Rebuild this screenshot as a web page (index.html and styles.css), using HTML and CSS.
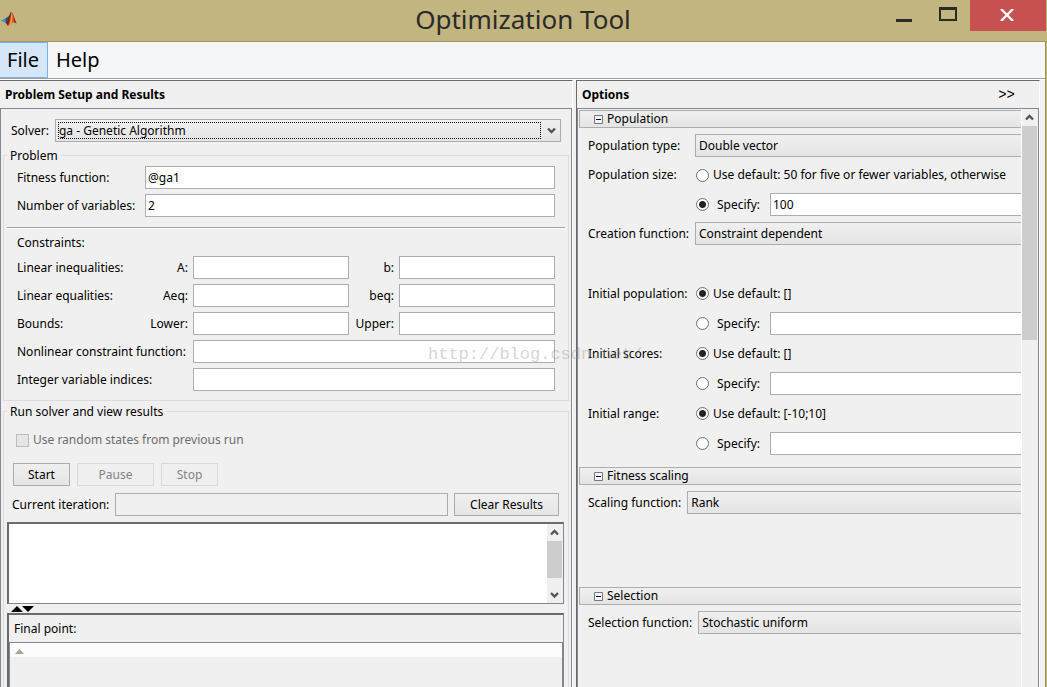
FILE: index.html
```html
<!DOCTYPE html>
<html lang="en">
<head>
<meta charset="utf-8">
<title>Optimization Tool</title>
<link rel="stylesheet" href="styles.css">
</head>
<body>
<header class="titlebar">
  <svg class="logo" width="16" height="16" viewBox="0 0 16 16" aria-hidden="true">
    <path d="M0 9.500 5 7l3 2.500L4.500 12z" fill="#3f8fc4"/>
    <path d="M5 7 8 5l2-4-1 7-2 3-2.500-1z" fill="#35506f"/>
    <path d="M4.500 11.500 7 9l3-8.500 1 4-1 6-3 4.500z" fill="#8a1f14"/>
    <path d="M10.500.5 12 3l3.500 9.500-2.500-1.500-2.500 1.500L7 15l2-6z" fill="#d9541e"/>
    <path d="M10.500 1.500 11.500 6l-.5 5.500L8 14.500l1.500-5z" fill="#f2a541"/>
    <path d="M12 4l3.500 8.500-2.500-1.500z" fill="#a82a1a"/>
  </svg>
  <h1 class="title">Optimization Tool</h1>
  <div class="window-buttons">
    <button class="win-btn" aria-label="Minimize"><svg width="18" height="18" viewBox="0 0 18 18"><path d="M1 12h16v3H1z" fill="#2a2a2a"/></svg></button>
    <button class="win-btn" aria-label="Maximize"><svg width="18" height="18" viewBox="0 0 18 18"><path d="M0 0h18v14H0zM2 3v9h14V3z" fill="#2a2a2a" fill-rule="evenodd"/></svg></button>
    <button class="win-btn close" aria-label="Close"><svg width="14" height="12" viewBox="0 0 14 12"><path d="M1 0 13 12M13 0 1 12" stroke="#fff" stroke-width="2.400"/></svg></button>
  </div>
</header>
<div class="frame">
  <nav class="menubar">
    <button class="menu active">File</button>
    <button class="menu">Help</button>
  </nav>
  <main class="panes">
    <section class="pane setup">
      <h2 class="pane-title">Problem Setup and Results</h2>
      <div class="setup-body">
        <div class="solver">
          <label for="solver">Solver:</label>
          <div class="solver-box">
            <select id="solver" class="select"><option>ga - Genetic Algorithm</option></select>
            <span class="focus-ring"></span>
            <svg class="chevron" width="9" height="7" viewBox="0 0 9 7"><path d="M1 1.500 4.500 5 8 1.500" fill="none" stroke="#555" stroke-width="2.400"/></svg>
          </div>
        </div>
        <fieldset class="group">
          <legend>Problem</legend>
          <div class="problem-grid">
            <label for="fit">Fitness function:</label><input id="fit" class="field" type="text" value="@ga1">
            <label for="nvars">Number of variables:</label><input id="nvars" class="field" type="text" value="2">
          </div>
          <hr class="rule">
          <p class="subhead">Constraints:</p>
          <div class="constraints">
            <span>Linear inequalities:</span><label class="end" for="a">A:</label><input id="a" class="field" type="text"><label class="end" for="b">b:</label><input id="b" class="field" type="text">
            <span>Linear equalities:</span><label class="end" for="aeq">Aeq:</label><input id="aeq" class="field" type="text"><label class="end" for="beq">beq:</label><input id="beq" class="field" type="text">
            <span>Bounds:</span><label class="end" for="lo">Lower:</label><input id="lo" class="field" type="text"><label class="end" for="up">Upper:</label><input id="up" class="field" type="text">
            <label class="two" for="nonl">Nonlinear constraint function:</label><input id="nonl" class="field three" type="text">
            <label class="two" for="ints">Integer variable indices:</label><input id="ints" class="field three" type="text">
          </div>
        </fieldset>
        <fieldset class="group run">
          <legend>Run solver and view results</legend>
          <label class="random"><input type="checkbox" class="check" disabled>Use random states from previous run</label>
          <div class="run-buttons">
            <button class="btn">Start</button>
            <button class="btn wide" disabled>Pause</button>
            <button class="btn" disabled>Stop</button>
          </div>
          <div class="iteration">
            <label for="iter">Current iteration:</label>
            <input id="iter" class="field readonly" type="text" readonly>
            <button class="btn clear">Clear Results</button>
          </div>
          <div class="output">
            <textarea class="log" aria-label="Results"></textarea>
            <div class="scrollbar">
              <svg class="arrow" width="15" height="17" viewBox="0 0 15 17"><path d="M4 10.500 7.500 7 11 10.500" fill="none" stroke="#555" stroke-width="2.400"/></svg>
              <span class="thumb"></span>
              <svg class="arrow last" width="15" height="17" viewBox="0 0 15 17"><path d="M4 7 7.500 10.500 11 7" fill="none" stroke="#555" stroke-width="2.400"/></svg>
            </div>
          </div>
          <svg class="split" width="24" height="9" viewBox="0 0 24 9"><path d="M0 8 6 2l6 6zM11 2h12l-6 6z" fill="#000"/></svg>
          <div class="final">
            <p class="final-title">Final point:</p>
            <table class="final-table">
              <thead><tr><th aria-label="Sort"><svg width="9" height="5" viewBox="0 0 9 5"><path d="M0 5 4.500 0 9 5z" fill="#a5a493"/></svg></th></tr></thead>
            </table>
          </div>
        </fieldset>
      </div>
    </section>
    <section class="pane options">
      <div class="options-head">
        <h2 class="pane-title">Options</h2>
        <button class="expand">&gt;&gt;</button>
      </div>
      <div class="options-body">
        <div class="options-list">
          <section class="opt-section population">
            <h3 class="bar"><svg width="9" height="9" viewBox="0 0 9 9"><path d="M.5.5h8v8h-8z" fill="#f5f5f5" stroke="#777"/><path d="M2 4h5v1H2z" fill="#00006b"/></svg>Population</h3>
            <div class="opt-grid">
              <label for="ptype">Population type:</label>
              <select id="ptype" class="select cut"><option>Double vector</option></select>
              <span class="row-a">Population size:</span>
              <label class="choice row-a"><input class="radio" type="radio" name="size">Use default: 50 for five or fewer variables, otherwise</label>
              <div class="specify"><label class="choice"><input class="radio" type="radio" name="size" checked>Specify:</label><input class="field cut" type="text" value="100" aria-label="Population size value"></div>
              <label class="creation" for="creation">Creation function:</label>
              <select id="creation" class="select cut creation"><option>Constraint dependent</option></select>
              <span class="row-b">Initial population:</span>
              <label class="choice row-b"><input class="radio" type="radio" name="pop" checked>Use default: []</label>
              <div class="specify"><label class="choice"><input class="radio" type="radio" name="pop">Specify:</label><input class="field cut" type="text" aria-label="Initial population value"></div>
              <span class="row-b">Initial scores:</span>
              <label class="choice row-b"><input class="radio" type="radio" name="scores" checked>Use default: []</label>
              <div class="specify"><label class="choice"><input class="radio" type="radio" name="scores">Specify:</label><input class="field cut" type="text" aria-label="Initial scores value"></div>
              <span class="row-b">Initial range:</span>
              <label class="choice row-b"><input class="radio" type="radio" name="range" checked>Use default: [-10;10]</label>
              <div class="specify"><label class="choice"><input class="radio" type="radio" name="range">Specify:</label><input class="field cut" type="text" aria-label="Initial range value"></div>
            </div>
          </section>
          <section class="opt-section scaling">
            <h3 class="bar"><svg width="9" height="9" viewBox="0 0 9 9"><path d="M.5.5h8v8h-8z" fill="#f5f5f5" stroke="#777"/><path d="M2 4h5v1H2z" fill="#00006b"/></svg>Fitness scaling</h3>
            <div class="opt-row"><label for="scal">Scaling function:</label><select id="scal" class="select cut"><option>Rank</option></select></div>
          </section>
          <section class="opt-section">
            <h3 class="bar"><svg width="9" height="9" viewBox="0 0 9 9"><path d="M.5.5h8v8h-8z" fill="#f5f5f5" stroke="#777"/><path d="M2 4h5v1H2z" fill="#00006b"/></svg>Selection</h3>
            <div class="opt-row selection"><label for="sel">Selection function:</label><select id="sel" class="select cut"><option>Stochastic uniform</option></select></div>
          </section>
        </div>
        <div class="scrollbar tall">
          <svg class="arrow" width="15" height="17" viewBox="0 0 15 17"><path d="M4 10.500 7.500 7 11 10.500" fill="none" stroke="#555" stroke-width="2.400"/></svg>
          <span class="thumb"></span>
        </div>
      </div>
    </section>
  </main>
</div>
<span class="watermark">http://blog.csdn.net/</span>
</body>
</html>
```
FILE: styles.css
```css
* { box-sizing: border-box; }
body {
  margin: 0;
  height: 100vh;
  display: flex;
  flex-direction: column;
  overflow: hidden;
  background: #f0f0f0;
  color: #000;
  font: 12px/16px "Noto Sans", "Open Sans", sans-serif;
}
h1, h2, h3, p { margin: 0; }
button, input, select, textarea { font: inherit; color: inherit; margin: 0; }
label, span { white-space: nowrap; }

.titlebar {
  flex: none;
  display: grid;
  grid-template-columns: 1fr auto 1fr;
  height: 42px;
  padding-right: 1px;
  background: #c2b580;
  border-bottom: 1px solid #a09468;
}
.logo { margin: 11px 0 0 1px; }
.title { font-size: 26px; font-weight: 400; line-height: 38px; color: #2a2a2a; }
.window-buttons { display: flex; justify-content: flex-end; align-items: flex-start; }
.win-btn { width: 44px; height: 31px; padding: 0; border: 0; background: none; display: grid; place-items: center; }
.win-btn.close { width: 76px; height: 31px; padding: 0 2px 2px 0; background: #c75050; }

.frame { flex: 1; min-height: 0; display: flex; flex-direction: column; border-right: 1px solid #c2b580; box-shadow: inset -1px 0 #a08f58; padding-right: 1px; }
.menubar { flex: none; display: flex; height: 37px; background: #f5f6f7; border-bottom: 1px solid #a0a0a0; }
.menu { height: 36px; padding: 0 8px 0 7px; border: 1px solid transparent; border-left: 0; background: none; font-size: 20px; line-height: 32px; }
.menu.active { background: #d5e6f8; border-color: #7bb1e8; }
.menu + .menu { padding-left: 8px; }

.panes { flex: 1; min-height: 0; display: grid; grid-template-columns: 573fr 464fr; column-gap: 3px; padding-right: 5px; border-top: 1px solid #fff; }
.pane { min-width: 0; display: flex; flex-direction: column; border-top: 1px solid #696969; border-right: 1px solid #fff; }
.pane-title { flex: none; height: 27px; padding-left: 5px; font-size: 12px; line-height: 27px; }
.setup { min-height: 0; }
.setup-body { flex: 1; min-height: 0; padding: 10px 2px 0; border: 1px solid #828790; border-bottom: 0; overflow: hidden; }
.solver { display: flex; align-items: center; gap: 6px; padding: 0 8px; }
.solver-box { flex: 1; position: relative; }
.solver-box .select { width: 100%; }
.focus-ring { position: absolute; inset: 3px 20px 3px 3px; border: 1px dotted #000; pointer-events: none; }
.chevron { position: absolute; right: 5px; top: 8px; pointer-events: none; }

.select { appearance: none; display: block; height: 23px; min-width: 0; padding: 0 4px 0 3px; border: 1px solid #abadb3; border-radius: 0; background: linear-gradient(#f0f0f0, #e4e4e4); line-height: 21px; }
.field { height: 23px; min-width: 0; width: 100%; padding: 0 2px; border: 1px solid #abadb3; background: #fff; }
.field.readonly { background: #f0f0f0; }
.cut { border-right: 0; }

.group { margin: 6px 0 0; padding: 4px 3px 9px; min-width: 0; border: 1px solid #dcdcdc; }
.group legend { height: 14px; padding: 0 3px; margin-left: 0; line-height: 16px; }
.problem-grid { display: grid; grid-template-columns: 123px 1fr; column-gap: 5px; row-gap: 5px; align-items: center; padding: 0 10px; }
.rule { height: 2px; margin: 10px 0 6px; border: 0; border-top: 1px solid #a0a0a0; border-bottom: 1px solid #fff; }
.subhead { padding-left: 10px; margin-bottom: 5px; }
.constraints { display: grid; grid-template-columns: 120px 56px 1fr 50px 1fr; row-gap: 5px; align-items: center; padding: 0 10px; }
.constraints .end { text-align: right; padding-right: 5px; }
.constraints .two { grid-column: span 2; }
.constraints .three { grid-column: span 3; }

.run { margin-top: 3px; padding-bottom: 0; border-bottom: 0; }
.random { display: flex; align-items: center; gap: 4px; height: 16px; margin: 10px 0 15px 9px; color: #6d6d6d; }
.check { appearance: none; width: 13px; height: 13px; border: 1px solid #bcbcbc; background: #e6e6e6; }
.run-buttons { display: flex; gap: 7px; padding-left: 6px; }
.btn { width: 57px; height: 23px; padding: 0; border: 1px solid #acacac; background: linear-gradient(#f0f0f0, #e5e5e5); line-height: 20px; }
.btn.wide { width: 77px; }
.btn.clear { width: 105px; flex: none; }
.btn:disabled { background: #efefef; border-color: #d9d9d9; color: #838383; }
.iteration { display: flex; align-items: center; gap: 6px; margin: 7px 0 6px; padding: 0 6px 0 5px; }
.iteration .field { flex: 1; }
.output { display: flex; height: 82px; margin-right: 1px; border: 1px solid #828790; border-top: 2px solid #696b70; border-left: 2px solid #696b70; background: #fff; }
.log { flex: 1; min-width: 0; padding: 2px; border: 0; outline: 0; resize: none; background: #fff; }
.scrollbar { flex: none; display: flex; flex-direction: column; width: 16px; background: #f0f0f0; }
.arrow { flex: none; }
.arrow.last { margin-top: auto; }
.thumb { width: 15px; height: 37px; background: #cdcdcd; }
.split { display: block; margin: 0 0 0 4px; }
.final { margin-right: 1px; border: 1px solid #828790; border-top: 2px solid #696b70; border-left: 2px solid #696b70; border-bottom: 0; }
.final-title { padding: 6px 5px 5px; }
.final-table { width: 100%; height: 45px; border: 1px solid #828790; border-bottom: 0; border-spacing: 0; }
.final-table th { padding: 5px 5px 0; text-align: left; vertical-align: top; line-height: 8px; background: linear-gradient(#fcfcfc 14px, #e6eefa 14px, #e6eefa 15px, #f0f0f0 15px); }
.final-table svg { display: block; margin-top: 1px; }

.options { border-left: 1px solid #696969; }
.options-head { display: flex; justify-content: space-between; height: 27px; }
.expand { padding: 0 24px 0 0; border: 0; background: none; font: 14px/28px "Liberation Mono", monospace; }
.options-body { flex: 1; min-height: 0; display: flex; border: 1px solid #828790; border-bottom: 0; }
.options-list { flex: 1; min-width: 0; overflow: hidden; padding: 1px 0 0 1px; border-right: 1px solid #fff; }
.bar { display: flex; align-items: center; gap: 4px; height: 18px; margin-bottom: 6px; padding-left: 14px; border: 1px solid #abadb3; border-right: 0; background: linear-gradient(#f0f0f0, #e4e4e4); font-size: 12px; font-weight: 400; line-height: 18px; }
.opt-grid { display: grid; grid-template-columns: 107px minmax(0, 1fr); align-items: center; padding-left: 9px; }
.row-a { height: 36px; line-height: 36px; }
.row-b { height: 37px; line-height: 37px; }
.choice { display: flex; align-items: center; gap: 4px; padding-left: 1px; overflow: hidden; }
.radio { appearance: none; flex: none; width: 13px; height: 13px; border: 1px solid #707070; border-radius: 50%; background: #fff; }
.radio:checked { background: radial-gradient(circle, #222 0 3px, #fff 4px); }
.specify { grid-column: 2; display: grid; grid-template-columns: 75px minmax(0, 1fr); align-items: center; }
.specify .choice { gap: 8px; }
.creation { margin: 6px 0 30px; }
.opt-row { display: flex; align-items: center; gap: 6px; padding-left: 9px; }
.opt-row .select { flex: 1; }
.population { margin-bottom: 12px; }
.scaling { margin-bottom: 73px; }
.tall .thumb { height: 214px; }

.watermark { position: absolute; left: 428px; top: 345px; font: 17px/20px "Liberation Mono", monospace; color: rgba(150, 150, 140, 0.4); pointer-events: none; }
```
